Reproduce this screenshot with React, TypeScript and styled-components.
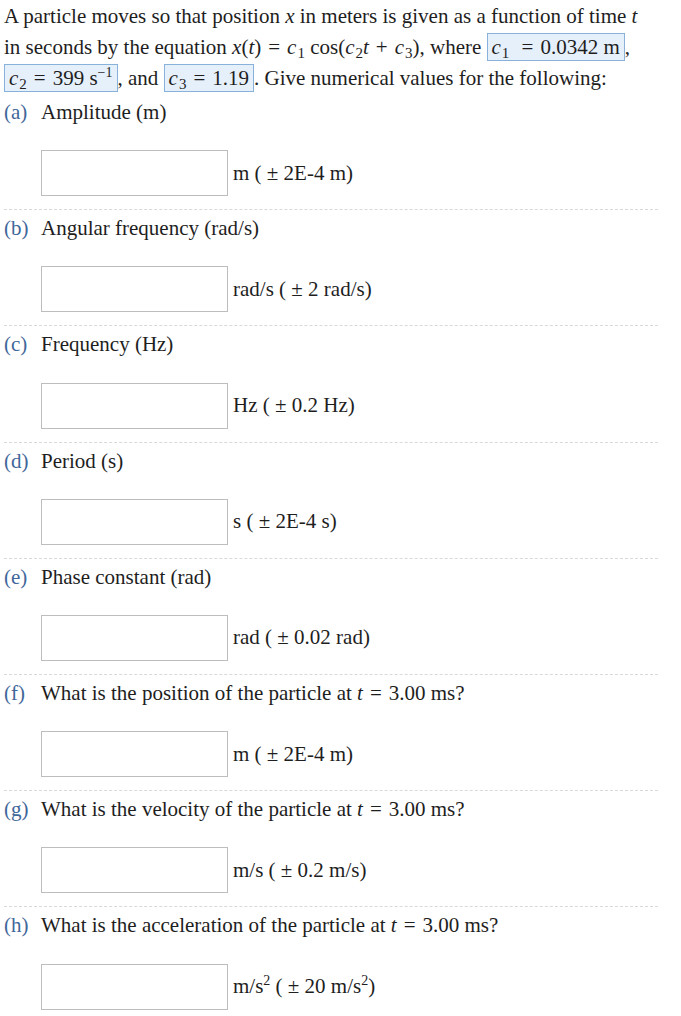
import React from 'react';
import styled, {createGlobalStyle} from 'styled-components';

const GlobalStyle = createGlobalStyle`
  body {
    margin: 0;
    background: #fff;
    color: #1e1e1e;
    font-family: "Liberation Serif", "DejaVu Serif", serif;
  }
`;

const Page = styled.div`
  width: 654px;
  padding: 1px 0 0 4px;
  font-size: 21px;
`;

const Intro = styled.p`
  margin: 0;
  line-height: 31px;
  white-space: nowrap;
`;

const Var = styled.i`
  font-style: italic;
`;

const Op = styled.span`
  margin: 0 7px;
`;

const Given = styled.span`
  display: inline-block;
  line-height: 26px;
  padding: 0 4px;
  background: #e6f0fb;
  border: 1px solid #88b2da;
`;

const Sub = styled.sub`
  font-size: 15px;
  line-height: 0;
  vertical-align: -4px;
  margin-left: 1px;
`;

const Sup = styled.sup`
  font-size: 14px;
  line-height: 0;
`;

const Part = styled.section`
  padding: 2px 0 13px;
  border-bottom: 1px dashed #d9d9d9;
  &:last-child {
    border-bottom: none;
  }
`;

const LabelRow = styled.div`
  display: flex;
  line-height: 32px;
`;

const Letter = styled.span`
  width: 37px;
  flex: none;
  color: #3f679a;
`;

const AnswerRow = styled.div`
  display: flex;
  align-items: center;
  margin: 22.2px 0 0 37px;
`;

const AnswerBox = styled.input`
  box-sizing: border-box;
  width: 187px;
  height: 46px;
  margin: 0;
  border: 1px solid #bdbdbd;
  border-radius: 0;
  background: #fff;
`;

const Unit = styled.span`
  margin-left: 5px;
`;

type PartProps = {letter: string; children: React.ReactNode; unit: React.ReactNode};

const Question: React.FC<PartProps> = ({letter, children, unit}) => (
  <Part>
    <LabelRow>
      <Letter>({letter})</Letter>
      <span>{children}</span>
    </LabelRow>
    <AnswerRow>
      <AnswerBox type="text" aria-label={`answer ${letter}`} />
      <Unit>{unit}</Unit>
    </AnswerRow>
  </Part>
);

const C: React.FC<{n: string}> = ({n}) => (
  <>
    <Var>c</Var>
    <Sub>{n}</Sub>
  </>
);

const AtTime = () => (
  <>
    <Var>t</Var>
    <Op>=</Op>3.00 ms?
  </>
);

export default function App() {
  return (
    <Page>
      <GlobalStyle />
      <Intro>
        A particle moves so that position <Var>x</Var> in meters is given as a function of time <Var>t</Var>
        <br />
        in seconds by the equation <Var>x</Var>(<Var>t</Var>)<Op>=</Op>
        <C n="1" /> cos(<C n="2" />
        <Var>t</Var>
        <Op>+</Op>
        <C n="3" />), where{' '}
        <Given>
          <C n="1" />
          <Op>&nbsp;=</Op>0.0342 m
        </Given>
        ,<br />
        <Given>
          <C n="2" />
          <Op>=</Op>399 s<Sup>−1</Sup>
        </Given>
        , and{' '}
        <Given>
          <C n="3" />
          <Op>=</Op>1.19
        </Given>
        . Give numerical values for the following:
      </Intro>
      <Question letter="a" unit="m ( ± 2E-4 m)">Amplitude (m)</Question>
      <Question letter="b" unit="rad/s ( ± 2 rad/s)">Angular frequency (rad/s)</Question>
      <Question letter="c" unit="Hz ( ± 0.2 Hz)">Frequency (Hz)</Question>
      <Question letter="d" unit="s ( ± 2E-4 s)">Period (s)</Question>
      <Question letter="e" unit="rad ( ± 0.02 rad)">Phase constant (rad)</Question>
      <Question letter="f" unit="m ( ± 2E-4 m)">
        What is the position of the particle at <AtTime />
      </Question>
      <Question letter="g" unit="m/s ( ± 0.2 m/s)">
        What is the velocity of the particle at <AtTime />
      </Question>
      <Question
        letter="h"
        unit={
          <>
            m/s<Sup>2</Sup> ( ± 20 m/s<Sup>2</Sup>)
          </>
        }
      >
        What is the acceleration of the particle at <AtTime />
      </Question>
    </Page>
  );
}
